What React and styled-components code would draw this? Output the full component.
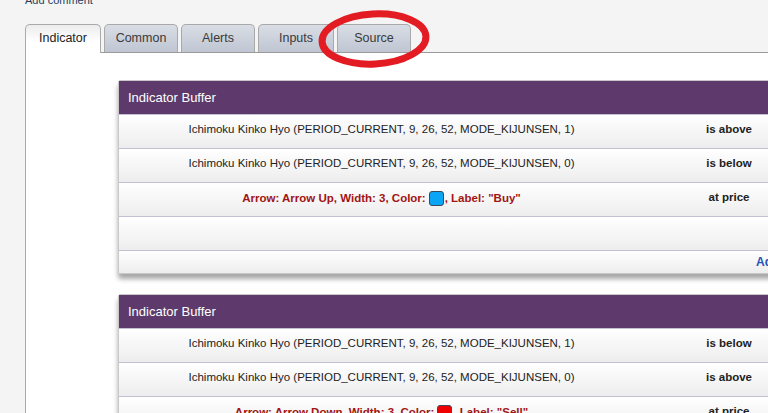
import React from "react";
import styled, { createGlobalStyle } from "styled-components";

const GlobalStyle = createGlobalStyle`
  html, body {
    margin: 0;
    padding: 0;
    background: #f4f4f4;
    overflow: hidden;
    font-family: "Liberation Sans", Arial, sans-serif;
  }
`;

const Page = styled.div`
  position: relative;
  width: 768px;
  height: 413px;
  overflow: hidden;
`;

const AddComment = styled.a`
  display: block;
  margin: -6px 0 0 25px;
  font-size: 11px;
  line-height: 13px;
  color: #243e5e;
  text-decoration: none;
`;

const TabArea = styled.div`
  margin: 17px 0 0 25px;
`;

const TabBar = styled.div`
  display: flex;
  gap: 3px;
  align-items: flex-end;
  border-bottom: 1px solid #9a9a9a;
  height: 28px;
`;

const Tab = styled.div`
  box-sizing: border-box;
  width: ${(p) => (p.$wide ? 76 : 74)}px;
  height: ${(p) => (p.$active ? 29 : 28)}px;
  margin-bottom: ${(p) => (p.$active ? -1 : 0)}px;
  border: 1px solid #a9a9a9;
  border-bottom: none;
  border-radius: 5px 5px 0 0;
  background: ${(p) =>
    p.$active
      ? "linear-gradient(#ececec, #ffffff 60%)"
      : "linear-gradient(#d9dde5, #bfc6d2)"};
  display: flex;
  align-items: center;
  justify-content: center;
  padding-bottom: ${(p) => (p.$active ? 2 : 1)}px;
  font-size: 12.5px;
  color: ${(p) => (p.$active ? "#222" : "#3a3a3a")};
`;

const Panel = styled.div`
  background: #fff;
  border-left: 1px solid #a9a9a9;
  padding: 27px 0 0 92px;
  height: 400px;
`;

const Card = styled.div`
  width: 720px;
  border: 1px solid #c9c9c9;
  border-right: none;
  border-radius: 3px 0 0 3px;
  background: #fff;
  box-shadow: 0 5px 5px rgba(0, 0, 0, 0.35);
  margin-bottom: 20px;
`;

const CardHeader = styled.div`
  height: 33px;
  background: #5e3a6c;
  color: #fff;
  font-size: 13px;
  display: flex;
  align-items: center;
  padding-left: 9px;
`;

const Row = styled.div`
  display: grid;
  grid-template-columns: 525px 170px;
  height: ${(p) => p.$h || 33}px;
  border-top: 1px solid #c6bfd1;
  background: linear-gradient(#ffffff, #ededed);
  font-size: 11.5px;
  color: #222;
`;

// conditions sit a little above the middle of their row
const Cond = styled.div`
  display: flex;
  align-items: center;
  justify-content: center;
  padding-bottom: ${(p) => (p.$arrow ? 3 : 6)}px;
  ${(p) => p.$arrow && "color: #a11414; font-weight: bold;"}
`;

const Op = styled.div`
  font-weight: bold;
  display: flex;
  align-items: center;
  justify-content: center;
  padding-bottom: ${(p) => (p.$up ? 6 : 6)}px;
`;

const Swatch = styled.span`
  display: inline-block;
  width: 15px;
  height: 15px;
  margin: 0 1px 0 3px;
  border: 1px solid #3b4a5a;
  border-radius: 3px;
  background: ${(p) => p.$color};
  box-sizing: border-box;
`;

const AddLink = styled.a`
  grid-column: 2;
  align-self: center;
  padding-left: 112px;
  font-size: 12px;
  font-weight: bold;
  color: #2553b8;
  white-space: nowrap;
`;

const Mark = styled.svg`
  position: absolute;
  left: 316px;
  top: 9px;
  pointer-events: none;
`;

function Buffer({ rows, arrow }) {
  return (
    <Card>
      <CardHeader>Indicator Buffer</CardHeader>
      {rows.map((r, i) => (
        <Row key={i}>
          <Cond>Ichimoku Kinko Hyo (PERIOD_CURRENT, 9, 26, 52, MODE_KIJUNSEN, {r.shift})</Cond>
          <Op>{r.op}</Op>
        </Row>
      ))}
      <Row>
        <Cond $arrow>
          Arrow: {arrow.name}, Width: 3, Color: <Swatch $color={arrow.color} />, Label: "{arrow.label}"
        </Cond>
        <Op $up>at price</Op>
      </Row>
      <Row />
      <Row $h={22}>
        <AddLink>Add condition</AddLink>
      </Row>
    </Card>
  );
}

export default function App() {
  const tabs = ["Indicator", "Common", "Alerts", "Inputs", "Source"];
  return (
    <Page>
      <GlobalStyle />
      <AddComment>Add comment</AddComment>
      <TabArea>
        <TabBar>
          {tabs.map((t, i) => (
            <Tab key={t} $active={i === 0} $wide={i === 0 || i === 3}>
              {t}
            </Tab>
          ))}
        </TabBar>
        <Panel>
          <Buffer
            rows={[
              { shift: 1, op: "is above" },
              { shift: 0, op: "is below" },
            ]}
            arrow={{ name: "Arrow Up", color: "#0aa6f5", label: "Buy" }}
          />
          <Buffer
            rows={[
              { shift: 1, op: "is below" },
              { shift: 0, op: "is above" },
            ]}
            arrow={{ name: "Arrow Down", color: "#f00000", label: "Sell" }}
          />
        </Panel>
      </TabArea>
      <Mark width="118" height="62" viewBox="0 0 118 62">
        <ellipse cx="58" cy="30" rx="52" ry="25" fill="none" stroke="#e31b23" strokeWidth="7" transform="rotate(-3 58 30)" />
      </Mark>
    </Page>
  );
}
